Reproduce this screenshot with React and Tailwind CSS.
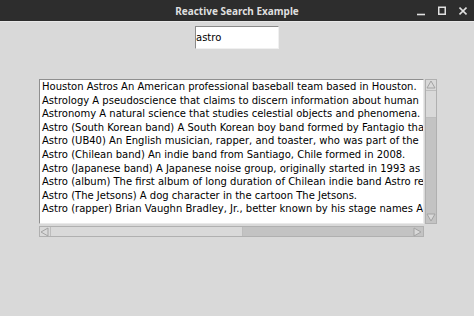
import React from "react";

const items = [
  "Houston Astros An American professional baseball team based in Houston.",
  "Astrology A pseudoscience that claims to discern information about human",
  "Astronomy A natural science that studies celestial objects and phenomena.",
  "Astro (South Korean band) A South Korean boy band formed by Fantagio that",
  "Astro (UB40) An English musician, rapper, and toaster, who was part of the",
  "Astro (Chilean band) An indie band from Santiago, Chile formed in 2008.",
  "Astro (Japanese band) A Japanese noise group, originally started in 1993 as",
  "Astro (album) The first album of long duration of Chilean indie band Astro re",
  "Astro (The Jetsons) A dog character in the cartoon The Jetsons.",
  "Astro (rapper) Brian Vaughn Bradley, Jr., better known by his stage names A",
];

function Arrow({ dir }) {
  const pts = {
    up: "1,8 5,1 9,8",
    down: "1,1 5,8 9,1",
    left: "8,1 1,5 8,9",
    right: "1,1 8,5 1,9",
  }[dir];
  return (
    <svg width="10" height="10" viewBox="0 0 10 10" className="block">
      <polygon points={pts} fill="#d9d9d9" stroke="#a3a3a3" strokeWidth="1" />
    </svg>
  );
}

export default function App() {
  return (
    <div
      className="w-[474px] h-[316px] bg-[#d9d9d9] flex flex-col overflow-hidden"
      style={{ fontFamily: '"DejaVu Sans", sans-serif' }}
    >
      <div className="h-[21px] bg-[#2d2d2d] grid grid-cols-[1fr_auto_1fr] items-center shrink-0">
        <div />
        <div className="text-[10px] font-bold text-[#dfdfdf] leading-none" style={{ fontFamily: '"Noto Sans", sans-serif' }}>
          Reactive Search Example
        </div>
        <div className="flex justify-end items-center gap-[13px] pr-[7px]">
          <svg width="8" height="10" viewBox="0 0 8 10"><path d="M0 8.5h8" stroke="#e0e0e0" strokeWidth="1.6" /></svg>
          <svg width="8" height="10" viewBox="0 0 8 10"><rect x="0.75" y="1.25" width="6.5" height="7" fill="none" stroke="#e0e0e0" strokeWidth="1.5" /></svg>
          <svg width="8" height="10" viewBox="0 0 8 10"><path d="M0.5 1.5l7 7M7.5 1.5l-7 7" stroke="#e0e0e0" strokeWidth="1.6" /></svg>
        </div>
      </div>
      <div className="h-px bg-[#e8e8e8] shrink-0" />
      <div className="flex justify-center mt-[4px]">
        <div className="w-[84px] h-[23px] bg-white border border-t-[#8a8a8a] border-l-[#8a8a8a] border-r-[#f0f0f0] border-b-[#f0f0f0] flex items-center text-[10px] text-black leading-none">
          astro
        </div>
      </div>
      <div className="mt-[30px] ml-[39px] grid grid-cols-[385px_12px] grid-rows-[145px_11px] gap-x-[1px] gap-y-[2px] w-[398px]">
        <div className="bg-white border border-[#8f8f8f] border-r-[#e9e9e9] border-b-[#e9e9e9] overflow-hidden pl-[2px]">
          {items.map((t) => (
            <div key={t} className="whitespace-nowrap text-[10px] leading-[13.6px] h-[13.6px] text-black">
              {t}
            </div>
          ))}
        </div>
        <div className="bg-[#c3c3c3] border border-[#b0b0b0] flex flex-col">
          <div className="h-[10px] bg-[#d9d9d9] flex items-center justify-center"><Arrow dir="up" /></div>
          <div className="h-[28px] bg-[#d9d9d9] border-t border-b border-[#bdbdbd]" />
          <div className="flex-1" />
          <div className="h-[10px] flex items-center justify-center"><Arrow dir="down" /></div>
        </div>
        <div className="bg-[#c3c3c3] border border-[#b0b0b0] flex">
          <div className="w-[10px] bg-[#d9d9d9] flex items-center justify-center"><Arrow dir="left" /></div>
          <div className="w-[193px] bg-[#d9d9d9] border-l border-r border-[#bdbdbd]" />
          <div className="flex-1" />
          <div className="w-[10px] flex items-center justify-center"><Arrow dir="right" /></div>
        </div>
        <div />
      </div>
    </div>
  );
}
